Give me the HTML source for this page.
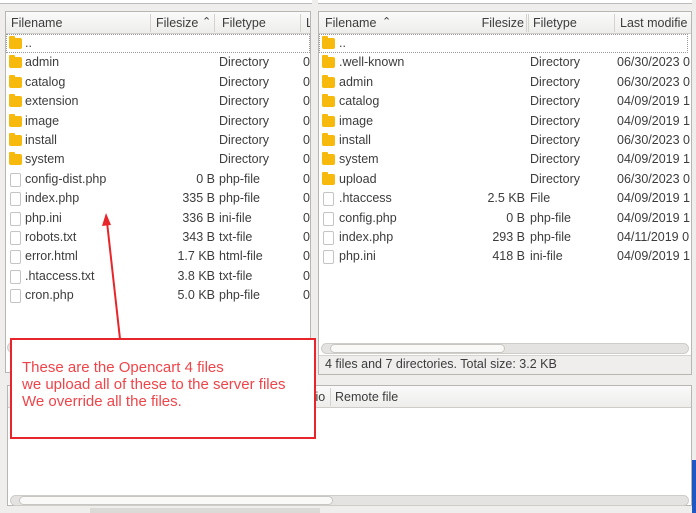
<!DOCTYPE html>
<html><head><meta charset="utf-8"><style>
*{margin:0;padding:0;box-sizing:border-box}
body{width:696px;height:513px;overflow:hidden;background:#efeeed;font-family:"Liberation Sans",sans-serif;font-size:12.5px;color:#3c3c3c;position:relative}
.abs{position:absolute}
.panel{position:absolute;background:#fff;border:1px solid #b8b6b2}
.hdr{position:absolute;left:0;right:0;top:0;height:22px;background:linear-gradient(#fafafa,#ededeb);border-bottom:1px solid #cfcdc9}
.hdr span{position:absolute;top:4px;white-space:nowrap}
.sep{position:absolute;top:2px;width:1px;height:18px;background:#d5d3cf}
.row{position:absolute;left:0;right:0;height:19.4px;line-height:19.4px;white-space:nowrap}
.row span{position:absolute;top:0}
.fo{position:absolute;top:4px;width:13px;height:11px;background:#f6b90c;border-radius:2px}
.fo:before{content:"";position:absolute;left:0;top:-2px;width:6px;height:3px;background:#f6b90c;border-radius:1px 1px 0 0}
.fi{position:absolute;top:3px;width:11px;height:14px;border:1px solid #c4c4c4;border-radius:2px;background:#fff}
.r{text-align:right}
.sb{position:absolute;height:11px;background:#e4e3e1;border:1px solid #cfcdc9;border-radius:6px}
.th{position:absolute;top:0;height:9px;background:#f9f9f8;border:1px solid #c8c6c2;border-radius:5px}
.dot{outline:1px dotted #999;outline-offset:-1px}
</style></head><body>
<div class="abs" style="left:0;top:0;width:312px;height:4px;background:#fff;border-bottom:1px solid #bbb"></div>
<div class="abs" style="left:318px;top:0;width:374px;height:4px;background:#fff;border-bottom:1px solid #bbb"></div>

<!-- left panel -->
<div class="panel" style="left:5px;top:11px;width:306px;height:362px;overflow:hidden">
 <div class="hdr"><span style="left:5px">Filename</span><div class="sep" style="left:144px"></div><span style="left:150px">Filesize</span><span style="left:196px;font-size:11px;top:3px">&#8963;</span><div class="sep" style="left:208px"></div><span style="left:216px">Filetype</span><div class="sep" style="left:294px"></div><span style="left:300px">L</span></div>
 <div style="position:absolute;left:0;top:22px;width:100%">
  <div class="row dot" style="top:0"><div class="fo" style="left:3px"></div><span style="left:19px">..</span></div>
  <div class="row" style="top:19.4px"><div class="fo" style="left:3px"></div><span style="left:19px">admin</span><span style="left:213px">Directory</span><span style="left:297px">0</span></div>
  <div class="row" style="top:38.8px"><div class="fo" style="left:3px"></div><span style="left:19px">catalog</span><span style="left:213px">Directory</span><span style="left:297px">0</span></div>
  <div class="row" style="top:58.2px"><div class="fo" style="left:3px"></div><span style="left:19px">extension</span><span style="left:213px">Directory</span><span style="left:297px">0</span></div>
  <div class="row" style="top:77.6px"><div class="fo" style="left:3px"></div><span style="left:19px">image</span><span style="left:213px">Directory</span><span style="left:297px">0</span></div>
  <div class="row" style="top:97px"><div class="fo" style="left:3px"></div><span style="left:19px">install</span><span style="left:213px">Directory</span><span style="left:297px">0</span></div>
  <div class="row" style="top:116.4px"><div class="fo" style="left:3px"></div><span style="left:19px">system</span><span style="left:213px">Directory</span><span style="left:297px">0</span></div>
  <div class="row" style="top:135.8px"><div class="fi" style="left:4px"></div><span style="left:19px">config-dist.php</span><span class="r" style="right:95px">0 B</span><span style="left:213px">php-file</span><span style="left:297px">0</span></div>
  <div class="row" style="top:155.2px"><div class="fi" style="left:4px"></div><span style="left:19px">index.php</span><span class="r" style="right:95px">335 B</span><span style="left:213px">php-file</span><span style="left:297px">0</span></div>
  <div class="row" style="top:174.6px"><div class="fi" style="left:4px"></div><span style="left:19px">php.ini</span><span class="r" style="right:95px">336 B</span><span style="left:213px">ini-file</span><span style="left:297px">0</span></div>
  <div class="row" style="top:194px"><div class="fi" style="left:4px"></div><span style="left:19px">robots.txt</span><span class="r" style="right:95px">343 B</span><span style="left:213px">txt-file</span><span style="left:297px">0</span></div>
  <div class="row" style="top:213.4px"><div class="fi" style="left:4px"></div><span style="left:19px">error.html</span><span class="r" style="right:95px">1.7 KB</span><span style="left:213px">html-file</span><span style="left:297px">0</span></div>
  <div class="row" style="top:232.8px"><div class="fi" style="left:4px"></div><span style="left:19px">.htaccess.txt</span><span class="r" style="right:95px">3.8 KB</span><span style="left:213px">txt-file</span><span style="left:297px">0</span></div>
  <div class="row" style="top:252.2px"><div class="fi" style="left:4px"></div><span style="left:19px">cron.php</span><span class="r" style="right:95px">5.0 KB</span><span style="left:213px">php-file</span><span style="left:297px">0</span></div>
 </div>
</div>

<!-- right panel -->
<div class="panel" style="left:318px;top:11px;width:374px;height:364px;overflow:hidden">
 <div class="hdr"><span style="left:6px">Filename</span><span style="left:63px;font-size:11px;top:3px">&#8963;</span><div class="sep" style="left:207px"></div><span style="right:167px">Filesize</span><div class="sep" style="left:209px"></div><span style="left:214px">Filetype</span><div class="sep" style="left:295px"></div><span style="left:301px">Last modifie</span></div>
 <div style="position:absolute;left:0;top:22px;width:100%">
  <div class="row dot" style="top:0;right:3px"><div class="fo" style="left:3px"></div><span style="left:20px">..</span></div>
  <div class="row" style="top:19.4px"><div class="fo" style="left:3px"></div><span style="left:20px">.well-known</span><span style="left:211px">Directory</span><span style="left:298px">06/30/2023 0</span></div>
  <div class="row" style="top:38.8px"><div class="fo" style="left:3px"></div><span style="left:20px">admin</span><span style="left:211px">Directory</span><span style="left:298px">06/30/2023 0</span></div>
  <div class="row" style="top:58.2px"><div class="fo" style="left:3px"></div><span style="left:20px">catalog</span><span style="left:211px">Directory</span><span style="left:298px">04/09/2019 1</span></div>
  <div class="row" style="top:77.6px"><div class="fo" style="left:3px"></div><span style="left:20px">image</span><span style="left:211px">Directory</span><span style="left:298px">04/09/2019 1</span></div>
  <div class="row" style="top:97px"><div class="fo" style="left:3px"></div><span style="left:20px">install</span><span style="left:211px">Directory</span><span style="left:298px">06/30/2023 0</span></div>
  <div class="row" style="top:116.4px"><div class="fo" style="left:3px"></div><span style="left:20px">system</span><span style="left:211px">Directory</span><span style="left:298px">04/09/2019 1</span></div>
  <div class="row" style="top:135.8px"><div class="fo" style="left:3px"></div><span style="left:20px">upload</span><span style="left:211px">Directory</span><span style="left:298px">06/30/2023 0</span></div>
  <div class="row" style="top:155.2px"><div class="fi" style="left:4px"></div><span style="left:20px">.htaccess</span><span class="r" style="right:166px">2.5 KB</span><span style="left:211px">File</span><span style="left:298px">04/09/2019 1</span></div>
  <div class="row" style="top:174.6px"><div class="fi" style="left:4px"></div><span style="left:20px">config.php</span><span class="r" style="right:166px">0 B</span><span style="left:211px">php-file</span><span style="left:298px">04/09/2019 1</span></div>
  <div class="row" style="top:194px"><div class="fi" style="left:4px"></div><span style="left:20px">index.php</span><span class="r" style="right:166px">293 B</span><span style="left:211px">php-file</span><span style="left:298px">04/11/2019 0</span></div>
  <div class="row" style="top:213.4px"><div class="fi" style="left:4px"></div><span style="left:20px">php.ini</span><span class="r" style="right:166px">418 B</span><span style="left:211px">ini-file</span><span style="left:298px">04/09/2019 1</span></div>
 </div>
 <div class="sb" style="left:2px;top:331px;width:368px"><div class="th" style="left:8px;width:175px"></div></div>
 <div style="position:absolute;left:0;right:0;top:343px;height:21px;background:#efeeed;border-top:1px solid #d5d3cf"></div>
 <span class="abs" style="left:6px;top:345px">4 files and 7 directories. Total size: 3.2 KB</span>
</div>
<div class="sb" style="left:7px;top:342px;width:304px"></div>

<!-- bottom queue -->
<div class="panel" style="left:7px;top:385px;width:685px;height:121px">
 <div class="hdr" style="height:22px"><span style="left:304px">tio</span><div class="sep" style="left:322px"></div><span style="left:327px">Remote file</span></div>
 <div class="sb" style="left:2px;top:109px;width:679px"><div class="th" style="left:8px;width:314px"></div></div>
</div>
<div class="abs" style="left:90px;top:508px;width:230px;height:5px;background:#dcdad6"></div>
<div class="abs" style="left:692px;top:460px;width:4px;height:53px;background:#1f57c3"></div>

<!-- annotation -->
<svg class="abs" style="left:0;top:0" width="696" height="513">
 <line x1="120" y1="339" x2="107" y2="222" stroke="#e8252b" stroke-width="2"/>
 <polygon points="106,213 102,226 111,225" fill="#e8252b"/>
</svg>
<div class="abs" style="left:10px;top:338px;width:306px;height:101px;background:#fff;border:2px solid #e8252b"></div>
<div class="abs" style="left:22px;top:359px;color:#f04449;font-size:15px;line-height:17px;white-space:nowrap">These are the Opencart 4 files<br>we upload all of these to the server files<br>We override all the files.</div>
</body></html>
